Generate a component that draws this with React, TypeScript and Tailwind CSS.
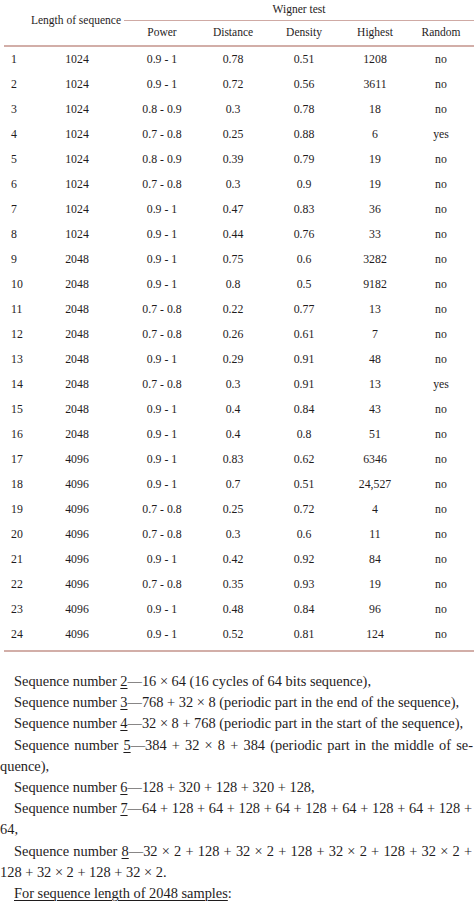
import React from 'react';

const rows: [string, string, string, string, string, string, string][] = [
  ['1', '1024', '0.9 - 1', '0.78', '0.51', '1208', 'no'],
  ['2', '1024', '0.9 - 1', '0.72', '0.56', '3611', 'no'],
  ['3', '1024', '0.8 - 0.9', '0.3', '0.78', '18', 'no'],
  ['4', '1024', '0.7 - 0.8', '0.25', '0.88', '6', 'yes'],
  ['5', '1024', '0.8 - 0.9', '0.39', '0.79', '19', 'no'],
  ['6', '1024', '0.7 - 0.8', '0.3', '0.9', '19', 'no'],
  ['7', '1024', '0.9 - 1', '0.47', '0.83', '36', 'no'],
  ['8', '1024', '0.9 - 1', '0.44', '0.76', '33', 'no'],
  ['9', '2048', '0.9 - 1', '0.75', '0.6', '3282', 'no'],
  ['10', '2048', '0.9 - 1', '0.8', '0.5', '9182', 'no'],
  ['11', '2048', '0.7 - 0.8', '0.22', '0.77', '13', 'no'],
  ['12', '2048', '0.7 - 0.8', '0.26', '0.61', '7', 'no'],
  ['13', '2048', '0.9 - 1', '0.29', '0.91', '48', 'no'],
  ['14', '2048', '0.7 - 0.8', '0.3', '0.91', '13', 'yes'],
  ['15', '2048', '0.9 - 1', '0.4', '0.84', '43', 'no'],
  ['16', '2048', '0.9 - 1', '0.4', '0.8', '51', 'no'],
  ['17', '4096', '0.9 - 1', '0.83', '0.62', '6346', 'no'],
  ['18', '4096', '0.9 - 1', '0.7', '0.51', '24,527', 'no'],
  ['19', '4096', '0.7 - 0.8', '0.25', '0.72', '4', 'no'],
  ['20', '4096', '0.7 - 0.8', '0.3', '0.6', '11', 'no'],
  ['21', '4096', '0.9 - 1', '0.42', '0.92', '84', 'no'],
  ['22', '4096', '0.7 - 0.8', '0.35', '0.93', '19', 'no'],
  ['23', '4096', '0.9 - 1', '0.48', '0.84', '96', 'no'],
  ['24', '4096', '0.9 - 1', '0.52', '0.81', '124', 'no'],
];

const cols = 'grid grid-cols-[30px_94px_76px_66px_76px_66px_66px]';

const U = ({ children }: { children: React.ReactNode }) => (
  <span className="underline underline-offset-2 decoration-1">{children}</span>
);

export default function App() {
  return (
    <div className="w-[474px] bg-white text-[#1f1c1d] font-['Liberation_Serif',serif] overflow-hidden">
      {/* Table header */}
      <div className={`${cols} text-[11.5px] leading-none`}>
        <div className="col-span-2 row-span-3 flex items-center justify-center pl-[28px] pb-[3px] whitespace-nowrap">
          Length of sequence
        </div>
        <div className="col-span-5 h-[20px] flex items-center justify-center">Wigner test</div>
        <div className="col-span-5 h-px bg-[#cfaaa4]" />
        {['Power', 'Distance', 'Density', 'Highest', 'Random'].map((h) => (
          <div key={h} className="h-[24px] flex items-center justify-center">
            {h}
          </div>
        ))}
      </div>
      <div className="ml-[4px] h-[2px] bg-[#d2aea8]" />

      {/* Table body */}
      <div className="text-[11.8px] leading-none">
        {rows.map((r) => (
          <div key={r[0]} className={`${cols} h-[25px] items-center`}>
            <div className="pl-[11px]">{r[0]}</div>
            {r.slice(1).map((c, i) => (
              <div key={i} className="text-center">
                {c}
              </div>
            ))}
          </div>
        ))}
      </div>
      <div className="mt-[3px] ml-[4px] h-[2px] bg-[#d2aea8]" />

      {/* Text */}
      <div className="mt-[19px] text-[14.4px] leading-[21.2px] text-[#1f1c1d]">
        <div className="indent-[14px] whitespace-nowrap">
          Sequence number <U>2</U>—16 × 64 (16 cycles of 64 bits sequence),
        </div>
        <div className="indent-[14px] whitespace-nowrap">
          Sequence number <U>3</U>—768 + 32 × 8 (periodic part in the end of the sequence),
        </div>
        <div className="indent-[14px] whitespace-nowrap">
          Sequence number <U>4</U>—32 × 8 + 768 (periodic part in the start of the sequence),
        </div>
        <div className="indent-[14px] whitespace-nowrap text-justify [text-align-last:justify] pr-px">
          Sequence number <U>5</U>—384 + 32 × 8 + 384 (periodic part in the middle of se-
        </div>
        <div>quence),</div>
        <div className="indent-[14px] whitespace-nowrap">
          Sequence number <U>6</U>—128 + 320 + 128 + 320 + 128,
        </div>
        <div className="indent-[14px] whitespace-nowrap text-justify [text-align-last:justify] pr-[2px]">
          Sequence number <U>7</U>—64 + 128 + 64 + 128 + 64 + 128 + 64 + 128 + 64 + 128 +
        </div>
        <div>64,</div>
        <div className="indent-[14px] whitespace-nowrap text-justify [text-align-last:justify] pr-[2px]">
          Sequence number <U>8</U>—32 × 2 + 128 + 32 × 2 + 128 + 32 × 2 + 128 + 32 × 2 +
        </div>
        <div>128 + 32 × 2 + 128 + 32 × 2.</div>
        <div className="indent-[14px] whitespace-nowrap">
          <U>For sequence length of 2048 samples</U>:
        </div>
      </div>
    </div>
  );
}
